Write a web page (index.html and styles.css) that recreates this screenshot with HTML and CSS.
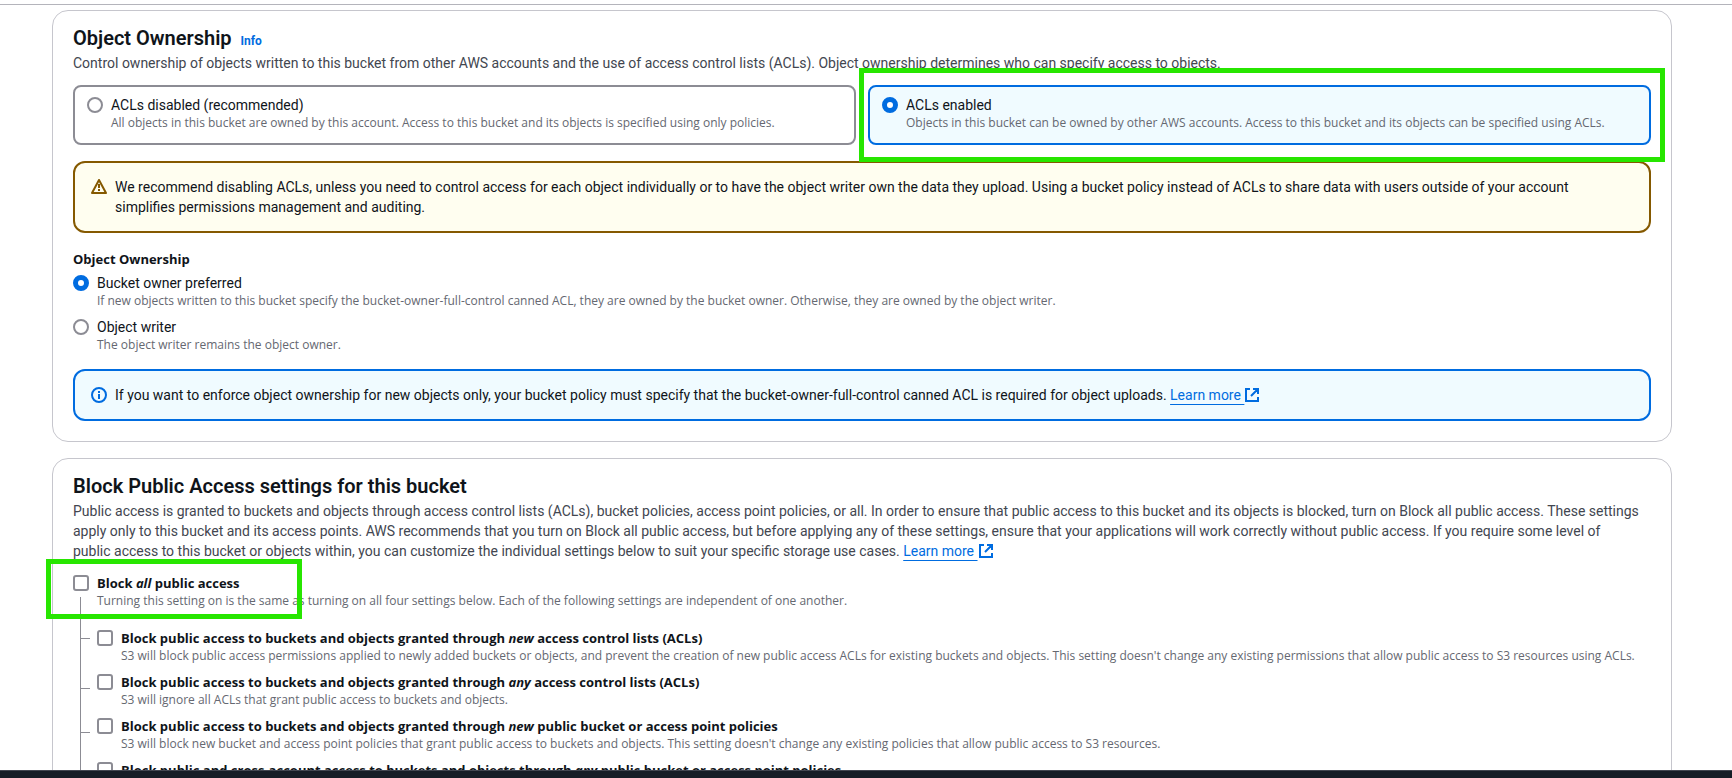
FILE: index.html
```html
<!DOCTYPE html>
<html lang="en">
<head>
<meta charset="utf-8">
<title>Create bucket</title>
<link rel="stylesheet" href="styles.css">
</head>
<body>
<div class="topbar"></div>
<main class="content">
  <section class="card">
    <header class="card-header">
      <h2 class="card-title">Object Ownership <a class="info" href="#">Info</a></h2>
      <p class="card-desc">Control ownership of objects written to this bucket from other AWS accounts and the use of access control lists (ACLs). Object ownership determines who can specify access to objects.</p>
    </header>
    <div class="tiles">
      <div class="tile option">
        <input class="radio" type="radio" name="acl" id="acl-off" aria-describedby="acl-off-d">
        <div class="option-text">
          <label for="acl-off">ACLs disabled (recommended)</label>
          <p class="hint" id="acl-off-d">All objects in this bucket are owned by this account. Access to this bucket and its objects is specified using only policies.</p>
        </div>
      </div>
      <div class="tile tile-selected option">
        <input class="radio" type="radio" name="acl" id="acl-on" aria-describedby="acl-on-d" checked>
        <div class="option-text">
          <label for="acl-on">ACLs enabled</label>
          <p class="hint" id="acl-on-d">Objects in this bucket can be owned by other AWS accounts. Access to this bucket and its objects can be specified using ACLs.</p>
        </div>
        <span class="mark mark-tile"></span>
      </div>
    </div>
    <div class="alert alert-warning">
      <svg class="alert-icon" viewBox="0 0 16 16" aria-hidden="true"><path d="M8 1 15 14H1L8 1Z"/><path d="M8 5v4M8 10v2"/></svg>
      <p>We recommend disabling ACLs, unless you need to control access for each object individually or to have the object writer own the data they upload. Using a bucket policy instead of ACLs to share data with users outside of your account<br>simplifies permissions management and auditing.</p>
    </div>
    <fieldset class="group">
      <legend class="group-label">Object Ownership</legend>
      <div class="option">
        <input class="radio" type="radio" name="owner" id="own-pref" aria-describedby="own-pref-d" checked>
        <div class="option-text">
          <label for="own-pref">Bucket owner preferred</label>
          <p class="hint" id="own-pref-d">If new objects written to this bucket specify the bucket-owner-full-control canned ACL, they are owned by the bucket owner. Otherwise, they are owned by the object writer.</p>
        </div>
      </div>
      <div class="option">
        <input class="radio" type="radio" name="owner" id="own-writer" aria-describedby="own-writer-d">
        <div class="option-text">
          <label for="own-writer">Object writer</label>
          <p class="hint" id="own-writer-d">The object writer remains the object owner.</p>
        </div>
      </div>
    </fieldset>
    <div class="alert alert-info">
      <svg class="alert-icon" viewBox="0 0 16 16" aria-hidden="true"><circle cx="8" cy="8" r="7"/><path d="M8 12V7M8 6V4"/></svg>
      <p>If you want to enforce object ownership for new objects only, your bucket policy must specify that the bucket-owner-full-control canned ACL is required for object uploads. <a class="link" href="#"><span class="link-text">Learn more&nbsp;</span><svg class="link-icon" viewBox="0 0 16 16" aria-hidden="true"><path d="M6 2H2v12h12v-4M9 2h5v5M7 9l7-7"/></svg></a></p>
    </div>
  </section>

  <section class="card">
    <header class="card-header">
      <h2 class="card-title">Block Public Access settings for this bucket</h2>
      <p class="card-desc">Public access is granted to buckets and objects through access control lists (ACLs), bucket policies, access point policies, or all. In order to ensure that public access to this bucket and its objects is blocked, turn on Block all public access. These settings<br>apply only to this bucket and its access points. AWS recommends that you turn on Block all public access, but before applying any of these settings, ensure that your applications will work correctly without public access. If you require some level of<br>public access to this bucket or objects within, you can customize the individual settings below to suit your specific storage use cases. <a class="link" href="#"><span class="link-text">Learn more&nbsp;</span><svg class="link-icon" viewBox="0 0 16 16" aria-hidden="true"><path d="M6 2H2v12h12v-4M9 2h5v5M7 9l7-7"/></svg></a></p>
    </header>
    <div class="option">
      <input class="checkbox" type="checkbox" id="block-all" aria-describedby="block-all-d">
      <div class="option-text">
        <label class="strong" for="block-all">Block <em>all</em> public access</label>
        <p class="hint" id="block-all-d">Turning this setting on is the same as turning on all four settings below. Each of the following settings are independent of one another.</p>
      </div>
      <span class="mark mark-block"></span>
    </div>
    <div class="tree">
      <div class="option branch">
        <input class="checkbox" type="checkbox" id="b1" aria-describedby="b1-d">
        <div class="option-text">
          <label class="strong" for="b1">Block public access to buckets and objects granted through <em>new</em> access control lists (ACLs)</label>
          <p class="hint" id="b1-d">S3 will block public access permissions applied to newly added buckets or objects, and prevent the creation of new public access ACLs for existing buckets and objects. This setting doesn't change any existing permissions that allow public access to S3 resources using ACLs.</p>
        </div>
      </div>
      <div class="option branch">
        <input class="checkbox" type="checkbox" id="b2" aria-describedby="b2-d">
        <div class="option-text">
          <label class="strong" for="b2">Block public access to buckets and objects granted through <em>any</em> access control lists (ACLs)</label>
          <p class="hint" id="b2-d">S3 will ignore all ACLs that grant public access to buckets and objects.</p>
        </div>
      </div>
      <div class="option branch">
        <input class="checkbox" type="checkbox" id="b3" aria-describedby="b3-d">
        <div class="option-text">
          <label class="strong" for="b3">Block public access to buckets and objects granted through <em>new</em> public bucket or access point policies</label>
          <p class="hint" id="b3-d">S3 will block new bucket and access point policies that grant public access to buckets and objects. This setting doesn't change any existing policies that allow public access to S3 resources.</p>
        </div>
      </div>
      <div class="option branch">
        <input class="checkbox" type="checkbox" id="b4">
        <div class="option-text">
          <label class="strong" for="b4">Block public and cross-account access to buckets and objects through <em>any</em> public bucket or access point policies</label>
        </div>
      </div>
    </div>
  </section>
</main>
<footer class="footer"></footer>
</body>
</html>
```
FILE: styles.css
```css
* { box-sizing: border-box; }

body {
  margin: 0;
  height: 100vh;
  display: flex;
  flex-direction: column;
  overflow: hidden;
  background: #fff;
  color: #0f141a;
  font: 14px/20px Roboto, "Open Sans", sans-serif;
}

p, h2 { margin: 0; }

.topbar { flex: none; height: 5px; border-bottom: 1px solid #b4b4bb; }

.content {
  flex: 1;
  min-height: 0;
  overflow: hidden;
  display: flex;
  flex-direction: column;
  gap: 16px;
  padding: 5px 60px 0 52px;
}

.footer { flex: none; height: 8px; background: #161d26; border-top: 1px solid #424650; }

.card {
  flex: none;
  display: flex;
  flex-direction: column;
  padding: 15px 20px 20px;
  border: 1px solid #c6c6cd;
  border-radius: 16px;
}

.card-header { margin-bottom: 12px; }
.card-title { margin-bottom: 3px; font-size: 20px; line-height: 24px; font-weight: 600; }
.card-desc { color: #424650; }
.info { margin-left: 4px; color: #006ce0; font-size: 12px; line-height: 16px; font-weight: 700; text-decoration: none; }

.tiles { display: grid; grid-template-columns: 1fr 1fr; gap: 12px; }
.tile { border: 2px solid #8c8c94; border-radius: 8px; padding: 8px 12px 12px; }
.tile-selected { border-color: #006ce0; background: #f0fbff; }

.option { position: relative; display: flex; gap: 8px; }
.option-text { min-width: 0; }
.option label { display: block; }
.strong, .group-label { font-family: "Open Sans", "Noto Sans", sans-serif; font-size: 13px; font-weight: 700; }
.hint { color: #656871; font-family: "Open Sans", "Noto Sans", sans-serif; font-size: 12px; line-height: 16px; }

.radio, .checkbox {
  appearance: none;
  flex: none;
  width: 16px;
  height: 16px;
  margin: 2px 0;
  border: 2px solid #8c8c94;
  background: #fff;
}
.radio { border-radius: 50%; }
.radio:checked { border: 5px solid #006ce0; }
.checkbox { border-radius: 3px; }

.alert {
  display: flex;
  gap: 8px;
  margin-top: 16px;
  padding: 14px 16px;
  border: 2px solid;
  border-radius: 12px;
}
.alert p { color: #0f141a; }
.alert-warning { border-color: #855900; background: #fffef0; color: #855900; }
.alert-info { border-color: #006ce0; background: #f0fbff; color: #006ce0; }
.alert-icon { flex: none; width: 16px; height: 16px; margin: 2px 0; fill: none; stroke: currentColor; stroke-width: 2; stroke-linejoin: round; }

.group { display: flex; flex-direction: column; gap: 8px; margin: 16px 0 0; padding: 0; border: 0; }
.group-label { padding: 0 0 4px; }

.link { color: #006ce0; text-decoration: none; white-space: nowrap; }
.link-text { text-decoration: underline; text-decoration-thickness: 1px; text-underline-offset: 4px; }
.link-icon { width: 16px; height: 16px; vertical-align: -3px; fill: none; stroke: currentColor; stroke-width: 2; }

.tree { position: relative; display: flex; flex-direction: column; gap: 8px; margin-top: 19px; padding-left: 24px; }
.tree::before { content: ""; position: absolute; left: 7px; top: -31px; bottom: 0; width: 1px; background: #8c8c94; }
.branch::before { content: ""; position: absolute; left: -16px; top: 16px; width: 9px; height: 1px; background: #8c8c94; }
.branch:first-child::before { top: 10px; }

.mark { position: absolute; z-index: 2; border: 5px solid #27e600; pointer-events: none; }
.mark-tile { inset: -19px -16px -19px -11px; }
.mark-block { left: -27px; top: -14px; bottom: -10px; width: 256px; }
```
